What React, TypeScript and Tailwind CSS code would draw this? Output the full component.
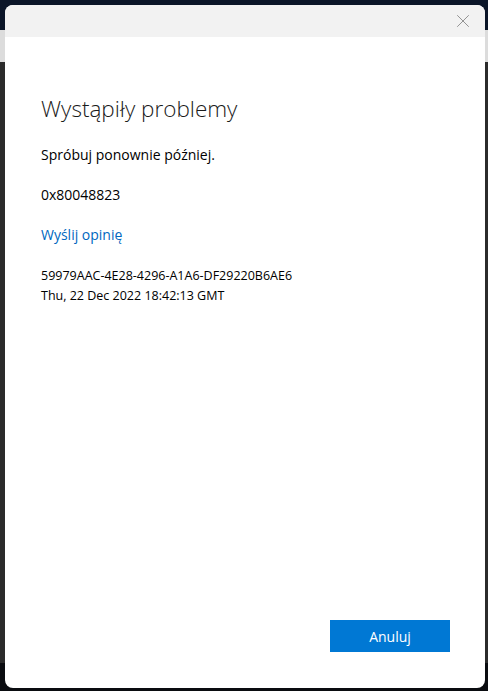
import { X } from "lucide-react";

export default function App() {
  return (
    <div className="relative h-[691px] w-[488px] overflow-hidden bg-[#2b2b2b] font-['Open_Sans',sans-serif]">
      {/* window behind the dialog */}
      <div className="flex h-full flex-col">
        <div className="h-[30px] bg-[#0b1528]" />
        <div className="h-[32px] bg-[#dcdcdc]" />
        <div className="flex-1 bg-[#2b2b2b]" />
        <div className="h-[28px] bg-[#0a0c10]" />
      </div>

      {/* Dialog */}
      <div className="absolute left-[5px] top-[5px] flex h-[683px] w-[480px] flex-col overflow-hidden rounded-[8px] bg-white">
        <div className="flex h-[32px] items-center justify-end bg-[#f2f2f2] pr-[11px]">
          <X className="h-[22px] w-[22px] text-[#8a8a8a]" strokeWidth={1} />
        </div>

        <div className="flex flex-1 flex-col px-[36px] pt-[56px] pb-[36px]">
          <h1 className="text-[22.5px] leading-[32px] font-light text-[#1a1a1a]">Wystąpiły problemy</h1>
          <p className="mt-[20px] text-[14px] leading-[20px] text-black">Spróbuj ponownie później.</p>
          <p className="mt-[20px] text-[14px] leading-[20px] text-black">0x80048823</p>
          <a className="mt-[20px] text-[14px] leading-[20px] text-[#0067c0]">Wyślij opinię</a>
          <div className="mt-[21px] text-[12.5px] leading-[20px] text-black">
            <div>59979AAC-4E28-4296-A1A6-DF29220B6AE6</div>
            <div>Thu, 22 Dec 2022 18:42:13 GMT</div>
          </div>

          <div className="flex-1" />

          <div className="flex justify-end">
            <button className="mr-[-1px] h-[32px] w-[120px] bg-[#0078d4] text-[14px] text-white">Anuluj</button>
          </div>
        </div>
      </div>
    </div>
  );
}
